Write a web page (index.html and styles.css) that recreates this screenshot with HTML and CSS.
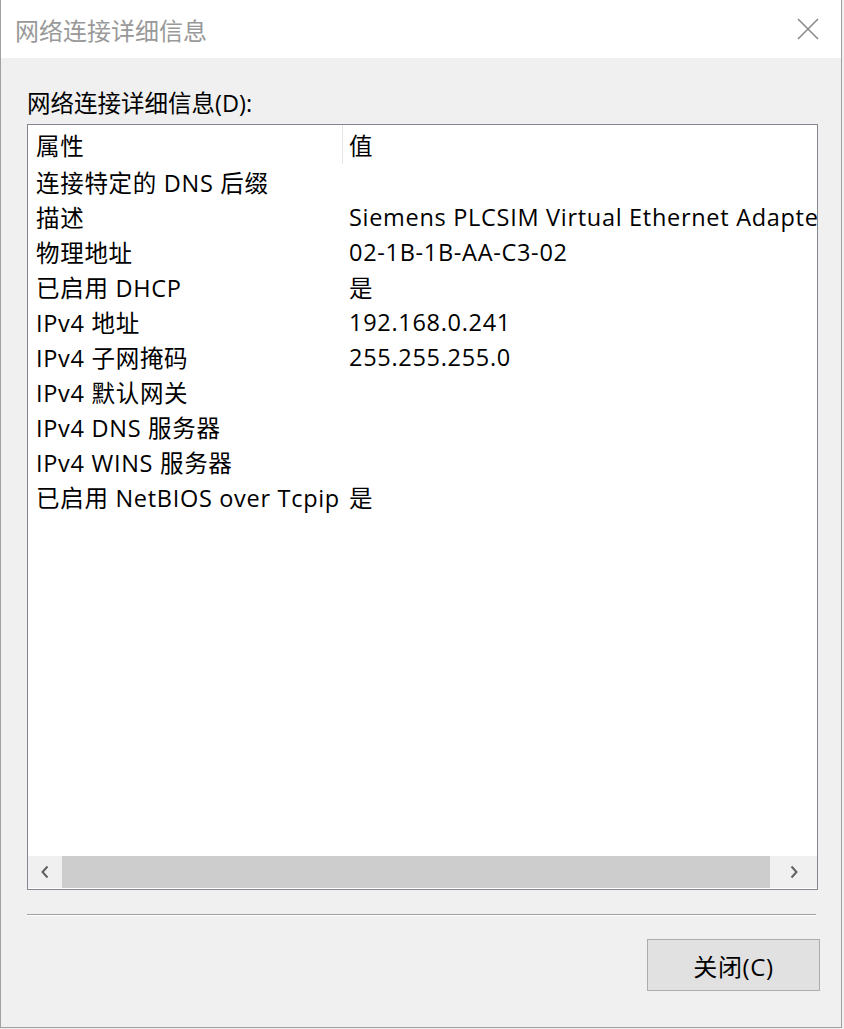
FILE: index.html
```html
<!DOCTYPE html>
<html lang="zh-CN">
<head>
<meta charset="utf-8">
<title>网络连接详细信息</title>
<link rel="stylesheet" href="styles.css">
</head>
<body>
<div class="window">
  <div class="titlebar">
    <span class="title">网络连接详细信息</span>
    <svg class="close" width="22" height="22" viewBox="0 0 22 22"><path d="M1 1 L21 21 M21 1 L1 21" stroke="#8a8a8a" stroke-width="1.6" fill="none"/></svg>
  </div>
  <div class="content">
    <div class="label">网络连接详细信息(D):</div>
    <div class="listbox">
      <div class="rows">
        <div class="row header"><div class="c1">属性</div><div class="c2">值</div></div>
        <div class="row"><div class="c1">连接特定的 DNS 后缀</div><div class="c2"></div></div>
        <div class="row"><div class="c1">描述</div><div class="c2">Siemens PLCSIM Virtual Ethernet Adapter</div></div>
        <div class="row"><div class="c1">物理地址</div><div class="c2">02-1B-1B-AA-C3-02</div></div>
        <div class="row"><div class="c1">已启用 DHCP</div><div class="c2">是</div></div>
        <div class="row"><div class="c1">IPv4 地址</div><div class="c2">192.168.0.241</div></div>
        <div class="row"><div class="c1">IPv4 子网掩码</div><div class="c2">255.255.255.0</div></div>
        <div class="row"><div class="c1">IPv4 默认网关</div><div class="c2"></div></div>
        <div class="row"><div class="c1">IPv4 DNS 服务器</div><div class="c2"></div></div>
        <div class="row"><div class="c1">IPv4 WINS 服务器</div><div class="c2"></div></div>
        <div class="row"><div class="c1">已启用 NetBIOS over Tcpip</div><div class="c2">是</div></div>
      </div>
      <div class="hscroll">
        <div class="arrow"><svg width="10" height="14" viewBox="0 0 10 14"><path d="M7.5 1.5 L2.5 7 L7.5 12.5" stroke="#606060" stroke-width="2" fill="none"/></svg></div>
        <div class="track"><div class="thumb"></div></div>
        <div class="arrow"><svg width="10" height="14" viewBox="0 0 10 14"><path d="M2.5 1.5 L7.5 7 L2.5 12.5" stroke="#606060" stroke-width="2" fill="none"/></svg></div>
      </div>
    </div>
    <div class="separator"></div>
    <div class="buttons">
      <button class="btn">关闭(C)</button>
    </div>
  </div>
</div>
</body>
</html>
```
FILE: styles.css
```css
html, body {
  margin: 0;
  padding: 0;
  background: #f0f0f0;
}
body {
  width: 844px;
  height: 1029px;
  overflow: hidden;
  font-family: "Open Sans", "Noto Sans CJK SC", sans-serif;
}
.window {
  width: 842px;
  height: 1028px;
  border-left: 1px solid #a0a0a0;
  border-right: 1px solid #a0a0a0;
  border-bottom: 1px solid #a0a0a0;
  background: #f0f0f0;
  display: flex;
  flex-direction: column;
  box-sizing: border-box;
}
.titlebar {
  height: 58px;
  background: #ffffff;
  display: flex;
  align-items: center;
  justify-content: space-between;
  padding: 0 22px 0 14px;
  flex: none;
}
.title {
  font-size: 24px;
  color: #999999;
  font-family: "Noto Sans CJK SC", sans-serif;
}
.close {
  display: block;
}
.content {
  flex: 1;
  display: flex;
  flex-direction: column;
  padding: 30px 26px 0 26px;
}
.label {
  font-size: 23.5px;
  line-height: 30px;
  color: #000;
  height: 36px;
}
.listbox {
  height: 766px;
  border: 1px solid #828790;
  background: #fff;
  display: flex;
  flex-direction: column;
  box-sizing: border-box;
  width: 791px;
}
.rows {
  flex: 1;
  overflow: hidden;
}
.row {
  display: grid;
  grid-template-columns: 314px 1fr;
  height: 35px;
  align-items: center;
  font-size: 23.5px;
  letter-spacing: 0.7px;
  color: #000;
  white-space: nowrap;
}
.row.header {
  height: 39px;
}
.row .c1 {
  padding-left: 8px;
  overflow: visible;
}
.row .c2 {
  padding-left: 7px;
  overflow: hidden;
}
.row.header .c2 {
  border-left: 1px solid #e5e5e5;
  height: 100%;
  display: flex;
  align-items: center;
  padding-left: 6px;
}
.hscroll {
  height: 32px;
  background: #f0f0f0;
  display: flex;
  margin-bottom: 1px;
}
.arrow {
  width: 34px;
  display: flex;
  align-items: center;
  justify-content: center;
}
.arrow:last-child {
  width: 47px;
}
.track {
  flex: 1;
  display: flex;
}
.thumb {
  flex: 1;
  background: #cdcdcd;
}
.separator {
  margin-top: 24px;
  width: 789px;
  height: 1px;
  background: #a0a0a0;
  border-bottom: 1px solid #ffffff;
}
.buttons {
  display: flex;
  justify-content: flex-end;
  margin-top: 23px;
}
.btn {
  width: 173px;
  height: 52px;
  background: #e1e1e1;
  border: 1px solid #adadad;
  font-family: "Open Sans", "Noto Sans CJK SC", sans-serif;
  font-size: 24px;
  letter-spacing: 0.6px;
  color: #000;
  margin-right: -5px;
}
```
